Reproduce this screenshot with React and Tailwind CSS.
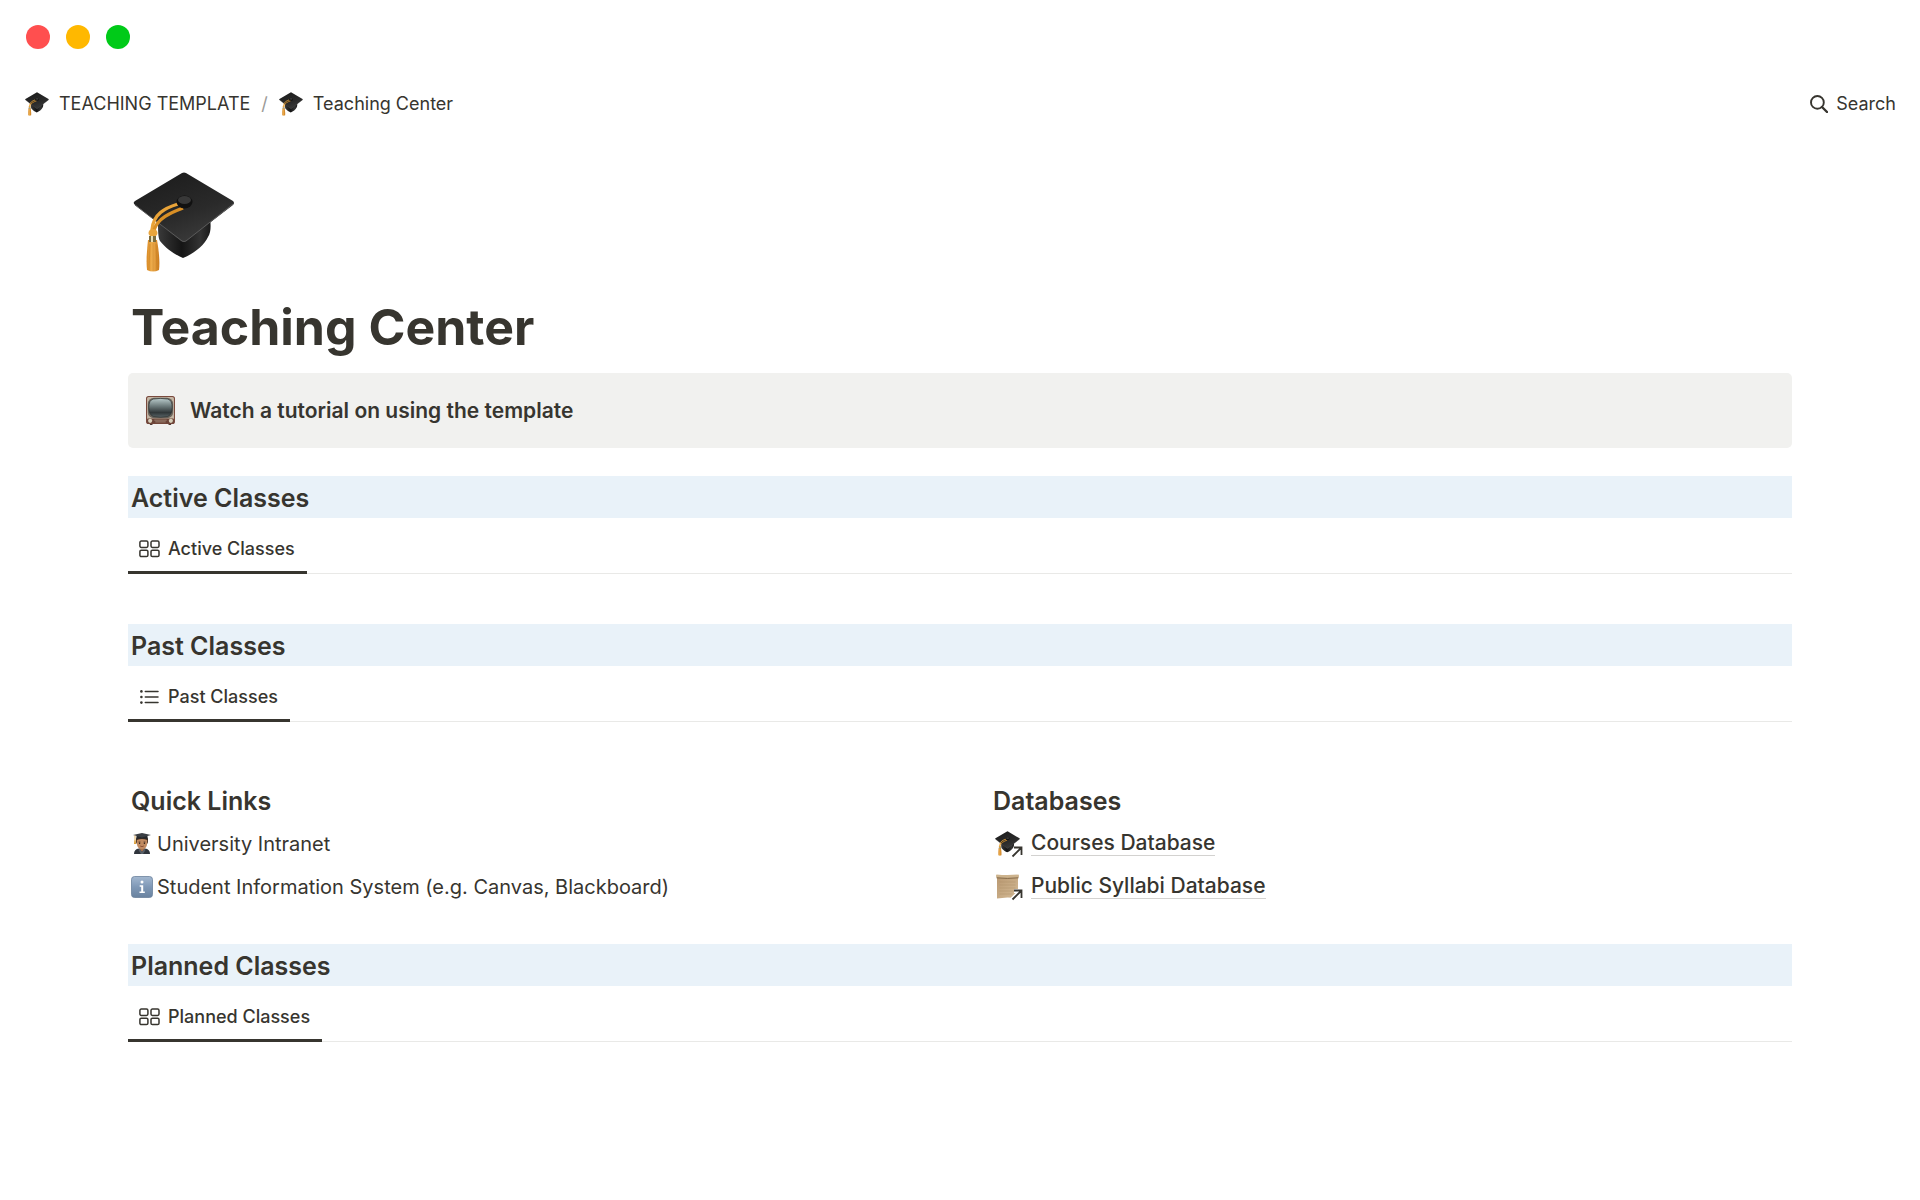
import { useId } from 'react';

function CapIcon({ className }) {
  const id = useId();

  return (
    <svg viewBox="0 0 102 100" className={className} aria-hidden="true">
      <defs>
        <linearGradient id={`${id}-board`} x1="0.2" y1="0" x2="0.7" y2="1">
          <stop offset="0" stopColor="#1c1c1c" />
          <stop offset="0.6" stopColor="#2a2a2a" />
          <stop offset="1" stopColor="#3c3c3c" />
        </linearGradient>
        <linearGradient id={`${id}-cap`} x1="0" y1="0" x2="1" y2="0">
          <stop offset="0" stopColor="#3a3a3a" />
          <stop offset="0.45" stopColor="#151515" />
          <stop offset="0.8" stopColor="#333333" />
          <stop offset="1" stopColor="#1a1a1a" />
        </linearGradient>
        <linearGradient id={`${id}-tassel`} x1="0" y1="0" x2="1" y2="0">
          <stop offset="0" stopColor="#d98a24" />
          <stop offset="0.45" stopColor="#f0b050" />
          <stop offset="1" stopColor="#c9791b" />
        </linearGradient>
      </defs>
      <path d="M25 44 C25 60 25 65 27 69 C33 77 43 83 50 86 C60 82 71 74 75 65 C78 60 78 55 77 44 Z" fill={`url(#${id}-cap)`} />
      <path d="M1 32 Q0 30 2 29 L49 1 Q51 0 53 1 L100 29 Q102 31 100 33 L53 69 Q51 71 48 69 Z" fill={`url(#${id}-board)`} />
      <path d="M2 33 L49 69 Q51 70 53 69 L100 32" fill="none" stroke="#5a5a5a" strokeWidth="1" />
      <path d="M45 32 C32 36 20 42 19 58" fill="none" stroke="#e9a338" strokeWidth="3.4" />
      <path d="M50 36 C37 41 25 46 21 58" fill="none" stroke="#d98f25" strokeWidth="3.4" />
      <ellipse cx="51.5" cy="30" rx="8" ry="6.5" fill="#111111" />
      <ellipse cx="51.5" cy="28" rx="6.5" ry="4" fill="#383838" />
      <path d="M15 68 L24 68 C26 80 27 90 26 98 Q20 101 14 98 C13 88 14 78 15 68 Z" fill={`url(#${id}-tassel)`} />
      <path d="M17 72 L16 98 M20 71 V99 M23 72 L24 98" stroke="#c27a1c" strokeWidth="0.7" opacity="0.6" />
      <ellipse cx="20" cy="61" rx="4.5" ry="4" fill="#eaa53c" />
      <rect x="16" y="64" width="7" height="6" fill="#7b6b3e" />
      <rect x="18" y="64" width="2" height="6" fill="#e8e0bb" />
    </svg>
  );
}

function TvIcon({ className }) {
  return (
    <svg viewBox="0 0 28 28" className={className} aria-hidden="true">
      <defs>
        <linearGradient id="tv-screen" x1="0" y1="0" x2="0" y2="1">
          <stop offset="0" stopColor="#b9cbcb" />
          <stop offset="0.4" stopColor="#6e7c7d" />
          <stop offset="0.75" stopColor="#303739" />
          <stop offset="1" stopColor="#596467" />
        </linearGradient>
      </defs>
      <path d="M3 26 H7 L6 28 H4 Z M21 26 H25 L24 28 H22 Z" fill="#4d3a34" />
      <rect x="0.5" y="0.5" width="27" height="26" rx="2" fill="#c4b6a4" stroke="#7a4a3d" />
      <rect x="1.8" y="1.6" width="24.4" height="20" rx="6" fill="#6a655d" />
      <path d="M7 3 Q14 1.6 21 3 Q25.3 4 25.3 11 Q25.3 18 21 19.8 Q14 21.3 7 19.8 Q2.7 18 2.7 11 Q2.7 4 7 3 Z" fill="url(#tv-screen)" stroke="#262b2c" strokeWidth="0.6" />
      <rect x="1" y="21.8" width="26" height="4.7" rx="1" fill="#6b4438" />
      <circle cx="4" cy="24" r="2" fill="#d8d0bb" />
      <circle cx="24" cy="24" r="2" fill="#d8d0bb" />
      <path d="M8 23.3 H20 M9 25 H19" stroke="#a58f7c" strokeWidth="0.8" />
    </svg>
  );
}

function StudentIcon({ className }) {
  return (
    <svg viewBox="0 0 22 22" className={className} aria-hidden="true">
      <path d="M3 21 Q3 16 8 15.5 H14 Q19 16 19 21 Z" fill="#30353c" />
      <path d="M8.5 14 H13.5 V16 L11 19 L8.5 16 Z" fill="#a9714a" />
      <path d="M8.5 15.5 L11 19 L13.5 15.5 L14.5 17 L12 21 H10 L7.5 17 Z" fill="#596069" />
      <rect x="5" y="4" width="12" height="7" rx="2" fill="#3b2a22" />
      <path d="M5.8 7 Q11 5 16.2 7 V10.5 Q15.7 16 11 16 Q6.3 16 5.8 10.5 Z" fill="#c08a61" />
      <path d="M7.6 9 H9.4 M12.6 9 H14.4" stroke="#3b2a22" strokeWidth="0.7" />
      <circle cx="8.6" cy="10.3" r="0.7" fill="#2b1d16" />
      <circle cx="13.4" cy="10.3" r="0.7" fill="#2b1d16" />
      <path d="M9.2 13 Q11 14.3 12.8 13" fill="none" stroke="#7b3f2b" strokeWidth="0.8" />
      <path d="M5.5 3 H16.5 V6 Q11 4.5 5.5 6 Z" fill="#25282c" />
      <path d="M2 2 L11 0 L20 2 L11 4.5 Z" fill="#3a3e43" />
      <path d="M4 2.5 V8" stroke="#dba03a" strokeWidth="0.8" />
      <path d="M3.3 7.5 H4.7 L5 11 H3 Z" fill="#dba03a" />
    </svg>
  );
}

function InfoIcon({ className }) {
  return (
    <svg viewBox="0 0 22 22" className={className} aria-hidden="true">
      <defs>
        <linearGradient id="info-tile" x1="0" y1="0" x2="0" y2="1">
          <stop offset="0" stopColor="#a3b8d0" />
          <stop offset="0.5" stopColor="#7f98b6" />
          <stop offset="1" stopColor="#69829f" />
        </linearGradient>
      </defs>
      <rect x="0.5" y="0.5" width="21" height="21" rx="3" fill="url(#info-tile)" stroke="#6b829c" strokeWidth="0.8" />
      <circle cx="11" cy="6" r="1.5" fill="#ffffff" />
      <path d="M8.7 9.2 H12.2 V15.4 H13.8 V16.9 H8.5 V15.4 H10.2 V10.7 H8.7 Z" fill="#ffffff" />
    </svg>
  );
}

function ScrollIcon({ className }) {
  return (
    <svg viewBox="0 0 24 25" className={className} aria-hidden="true">
      <defs>
        <linearGradient id="scroll-paper" x1="0" y1="0" x2="1" y2="1">
          <stop offset="0" stopColor="#b99972" />
          <stop offset="1" stopColor="#d5bb96" />
        </linearGradient>
      </defs>
      <path d="M1.5 3 H22.5 V24 L12 23.6 L1.5 24.5 Z" fill="url(#scroll-paper)" />
      <path d="M4 8 H20 M4 11 H20 M4 14 H20 M4 17 H20 M4 20 H17" stroke="#a58862" strokeWidth="0.5" opacity="0.7" />
      <path d="M1 0.5 Q12 1.5 23 0.5 Q24 2 23 3.6 Q12 4.6 1 3.6 Q0 2 1 0.5 Z" fill="#cdb38d" />
      <path d="M1 3.8 Q12 5 23 3.8" fill="none" stroke="#7d6242" strokeWidth="0.9" />
    </svg>
  );
}

function LinkArrow({ className }) {
  return (
    <svg viewBox="0 0 12 12" className={className} aria-hidden="true">
      <path d="M1.5 10.5 L10 2 M3 1.5 H10.5 V9" fill="none" stroke="#ffffff" strokeWidth="5" />
      <path d="M1.5 10.5 L10 2 M3 1.5 H10.5 V9" fill="none" stroke="#37352f" strokeWidth="1.8" />
    </svg>
  );
}

function SearchIcon({ className }) {
  return (
    <svg viewBox="0 0 18 18" className={className} aria-hidden="true">
      <circle cx="7.4" cy="7.4" r="6.4" fill="none" stroke="#37352f" strokeWidth="1.9" />
      <path d="M12 12 L17 17" stroke="#37352f" strokeWidth="2.4" strokeLinecap="round" />
    </svg>
  );
}

function GalleryIcon({ className }) {
  return (
    <svg viewBox="0 0 21 18" className={className} aria-hidden="true">
      <g fill="none" stroke="#37352f" strokeWidth="1.5">
        <rect x="0.9" y="1" width="8" height="6.4" rx="1.4" />
        <rect x="12" y="1" width="8" height="6.4" rx="1.4" />
        <rect x="0.9" y="10.2" width="8" height="6.4" rx="1.4" />
        <rect x="12" y="10.2" width="8" height="6.4" rx="1.4" />
      </g>
    </svg>
  );
}

function ListIcon({ className }) {
  return (
    <svg viewBox="0 0 21 18" className={className} aria-hidden="true">
      <g fill="#37352f">
        <circle cx="2.4" cy="3.4" r="1.3" />
        <circle cx="2.4" cy="9" r="1.3" />
        <circle cx="2.4" cy="14.6" r="1.3" />
      </g>
      <path d="M6.3 3.4 H19 M6.3 9 H19 M6.3 14.6 H19" stroke="#37352f" strokeWidth="1.5" strokeLinecap="round" />
    </svg>
  );
}

function ClassSection({ title, icon: Icon }) {
  return (
    <section>
      <h2 className="bg-[#e9f2f9] px-[3px] pt-0.5 text-[25px] font-semibold leading-10">{title}</h2>
      <div role="tablist" className="flex h-14 border-b border-[#e9e9e7]">
        <button
          type="button"
          role="tab"
          aria-selected="true"
          className="-mb-px flex items-center gap-2 border-b-3 border-[#37352f] pt-2 pr-3 pl-[11px] text-lg font-medium"
        >
          <Icon className="h-[18px] w-[21px]" />
          {title}
        </button>
      </div>
    </section>
  );
}

const quickLinks = [
  { label: 'University Intranet', icon: StudentIcon },
  { label: 'Student Information System (e.g. Canvas, Blackboard)', icon: InfoIcon },
];

const databases = [
  { label: 'Courses Database', icon: CapIcon },
  { label: 'Public Syllabi Database', icon: ScrollIcon },
];

export default function App() {
  return (
    <div className="min-h-screen bg-white font-['Inter',sans-serif] text-[#37352f]">
      <div className="flex gap-4 px-[26px] pt-[25px]">
        <span className="size-6 rounded-full bg-[#ff4f4f]" />
        <span className="size-6 rounded-full bg-[#ffb800]" />
        <span className="size-6 rounded-full bg-[#00ca18]" />
      </div>

      <header className="mt-[35px] flex h-10 items-center justify-between pr-6 pl-[25px] text-lg">
        <nav aria-label="Breadcrumb" className="flex items-center gap-[11px]">
          <a href="#template" className="flex items-center gap-2.5">
            <CapIcon className="size-6" />
            TEACHING TEMPLATE
          </a>
          <span className="text-[#9b9a97]">/</span>
          <a href="#center" className="flex items-center gap-2.5">
            <CapIcon className="size-6" />
            Teaching Center
          </a>
        </nav>
        <button type="button" className="flex items-center gap-2">
          <SearchIcon className="size-[18px]" />
          Search
        </button>
      </header>

      <main className="px-32 pt-12">
        <CapIcon className="ml-[5px] h-[100px] w-[102px]" />
        <h1 className="mt-6 px-[3px] text-[50px] font-bold leading-[62px]">Teaching Center</h1>

        <div className="mt-[15px] flex h-[75px] items-center gap-[15px] rounded-[5px] bg-[#f1f1ef] px-[18px] text-[21px] font-semibold">
          <TvIcon className="size-[29px]" />
          <p>Watch a tutorial on using the template</p>
        </div>

        <div className="mt-7 flex flex-col gap-[50px]">
          <ClassSection title="Active Classes" icon={GalleryIcon} />
          <ClassSection title="Past Classes" icon={ListIcon} />
        </div>

        <div className="mt-[57px] grid grid-cols-2 gap-[60px]">
          <section className="px-[3px]">
            <h2 className="pt-0.5 text-[25px] font-semibold leading-10">Quick Links</h2>
            <ul className="mt-px text-[20px]">
              {quickLinks.map(({ label, icon: Icon }) => (
                <li key={label} className="flex h-[43px] items-center gap-1">
                  <Icon className="size-[22px]" />
                  {label}
                </li>
              ))}
            </ul>
          </section>
          <section className="px-[3px]">
            <h2 className="pt-0.5 text-[25px] font-semibold leading-10">Databases</h2>
            <ul className="mt-px text-[21px] font-medium">
              {databases.map(({ label, icon: Icon }) => (
                <li key={label} className="flex h-[43px] items-center">
                  <a href="#database" className="flex items-center gap-2">
                    <span className="relative w-[30px] pl-0.5">
                      <Icon className="size-[25px]" />
                      <LinkArrow className="absolute right-0 -bottom-0.5 size-3" />
                    </span>
                    <span className="border-b border-[#d3d2d0] leading-6">{label}</span>
                  </a>
                </li>
              ))}
            </ul>
          </section>
        </div>

        <div className="mt-9 pb-16">
          <ClassSection title="Planned Classes" icon={GalleryIcon} />
        </div>
      </main>
    </div>
  );
}
